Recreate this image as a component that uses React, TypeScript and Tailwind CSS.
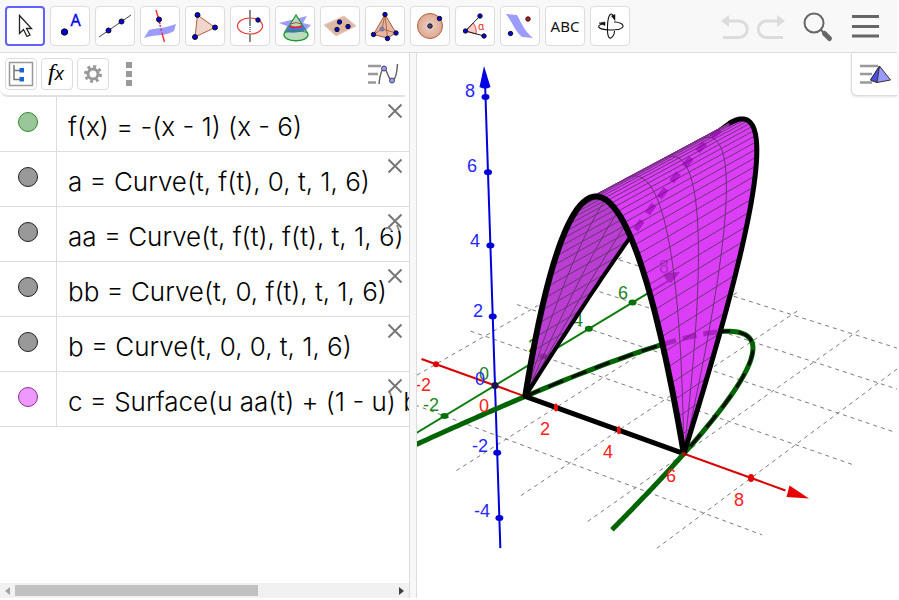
import type { ReactNode } from "react";

type Vec = [number, number, number];

/* ---------- 3D scene ---------- */

function project([x, y, z]: Vec): [number, number] {
  const w = 1 - 0.00794 * x + 0.01241 * y - 0.00697 * z;
  return [
    (495 + 26.04 * x + 30.77 * y - 4.571 * z) / w,
    (385.5 + 7.767 * x - 10.08 * y - 36.74 * z) / w,
  ];
}

function path(points: Vec[]): string {
  return points
    .map((p, i) => {
      const [u, v] = project(p);
      return `${i ? "L" : "M"}${u.toFixed(2)} ${v.toFixed(2)}`;
    })
    .join("");
}

function sample(from: number, to: number, at: (t: number) => Vec, n = 80): string {
  return path(Array.from({ length: n + 1 }, (_, i) => at(from + ((to - from) * i) / n)));
}

const f = (t: number) => -(t - 1) * (t - 6);
const surface = (t: number, u: number): Vec => [t, u * f(t), f(t)];

const STRIPS = 50;
const ts = Array.from({ length: STRIPS + 1 }, (_, i) => 1 + (5 * i) / STRIPS);
const strips = ts.slice(0, -1).map((t, i) => {
  const quad: Vec[] = [surface(t, 0), surface(ts[i + 1], 0), surface(ts[i + 1], 1), surface(t, 1)];
  const [a, b, c, d] = quad.map(project);
  const area = (c[0] - a[0]) * (d[1] - b[1]) - (c[1] - a[1]) * (d[0] - b[0]);
  const cross = [0.25, 0.5, 0.75].map((u) => path([surface(t, u), surface(ts[i + 1], u)])).join("");
  return {
    d: path(quad) + "Z",
    mesh: path([surface(t, 0), surface(t, 1)]) + cross,
    color: area < 0 ? "#dc3ef8" : "#bb3ed3",
    front: area < 0,
  };
});
const backStrips = strips.filter((s) => !s.front);
const frontStrips = strips.filter((s) => s.front);

const X_MIN = -2.5;
const X_MAX = 9.65;
const Y_MIN = -3.9;
const Y_MAX = 8.3;
const gridPath = [
  ...[-2, 2, 4, 6, 8].map((x) => path([[x, Y_MIN, 0], [x, Y_MAX, 0]])),
  ...[-2, 2, 4, 6, 8].map((y) => path([[X_MIN, y, 0], [X_MAX, y, 0]])),
].join("");

function Dot({ at, fill, rx = 3, ry = 3 }: { at: Vec; fill: string; rx?: number; ry?: number }) {
  const [u, v] = project(at);
  return <ellipse cx={u} cy={v} rx={rx} ry={ry} fill={fill} />;
}

function Label({ x, y, fill, children }: { x: number; y: number; fill: string; children: ReactNode }) {
  return (
    <text x={x} y={y} fill={fill} textAnchor="middle" fontSize="18" fontFamily="'Liberation Sans', Arial, sans-serif">
      {children}
    </text>
  );
}

function Strips({ items }: { items: typeof strips }) {
  return (
    <>
      {items.map((s, i) => (
        <g key={i}>
          <path d={s.d} fill={s.color} stroke={s.color} strokeWidth="0.500" />
          <path d={s.mesh} stroke="#5e3068" strokeWidth="0.900" fill="none" />
        </g>
      ))}
    </>
  );
}

function Graphics3D() {
  const ground = sample(1, 6, (t) => [t, f(t), 0]);
  return (
    <svg viewBox="417 53 480 545" className="block h-full w-full" role="img" aria-label="3D graphics view">
      <defs>
        <clipPath id="sheet">
          {strips.map((s, i) => (
            <path key={i} d={s.d} />
          ))}
        </clipPath>
        <clipPath id="front">
          {frontStrips.map((s, i) => (
            <path key={i} d={s.d} />
          ))}
        </clipPath>
      </defs>
      <path d={gridPath} stroke="#7c7c7c" strokeWidth="1" strokeDasharray="4 4" fill="none" />

      {/* y axis */}
      <path d={path([[0, Y_MIN, 0], [0, 8, 0]])} stroke="#0c7d0c" strokeWidth="2" />
      {[-2, 2, 4, 6].map((y) => (
        <Dot key={y} at={[0, y, 0]} fill="#077007" rx={4} />
      ))}
      <Label x={431} y={411} fill="#1b861b">-2</Label>
      <Label x={484} y={380} fill="#1b861b">0</Label>
      <Label x={533} y={352} fill="#1b861b">2</Label>
      <Label x={578} y={326} fill="#1b861b">4</Label>
      <Label x={623} y={299} fill="#1b861b">6</Label>

      {/* x axis */}
      <path d={path([[X_MIN, 0, 0], [9, 0, 0]])} stroke="#d90000" strokeWidth="2" />
      <path d="M789.500 485.500L786.500 497L809 498.500Z" fill="#e60000" />

      {/* z axis */}
      <path d={path([[0, 0, -4.94], [0, 0, 8.3]])} stroke="#0000d9" strokeWidth="2" />
      <path d="M484 66L479.500 87Q485 90 490.500 87Z" fill="#0000e6" />
      {[-4, -2, 2, 4, 6, 8].map((z) => (
        <Dot key={z} at={[0, 0, z]} fill="#0000d9" rx={4} />
      ))}
      <circle cx="495" cy="385.500" r="3.500" fill="#171750" />
      <Dot at={[-2, 0, 0]} fill="#e60000" rx={3} />
      <Dot at={[8, 0, 0]} fill="#e60000" ry={4} />

      {/* graph of f and the curves lying on the ground plane */}
      <path d={sample(-0.9, 1, (t) => [t, f(t), 0])} stroke="#006400" strokeWidth="5" fill="none" />
      <path d={ground} stroke="#006400" strokeWidth="5" fill="none" />
      <path d={ground} stroke="#0a0a0a" strokeWidth="3" strokeDasharray="16 9" fill="none" />

      {/* surface, far side first */}
      <Strips items={backStrips} />
      <path d={sample(1, 3.5, (t) => surface(t, 1))} stroke="#000" strokeWidth="4" fill="none" />
      <Strips items={frontStrips} />

      {/* parts seen through the surface */}
      <g clipPath="url(#sheet)" opacity="0.500">
        <path d={ground} stroke="#7d0a90" strokeWidth="5" strokeDasharray="14 7" fill="none" />
        <path d="M668 282L663 275Q668 272 680 272L671 283Z" fill="#7d0a90" />
        <path d={path([[0, 6, 0], [0, 8, 0]])} stroke="#7d0a90" strokeWidth="2" />
        <Dot at={[0, 2, 0]} fill="#6d167c" rx={4} />
        <Label x={664} y={273} fill="#7a1a8c">8</Label>
      </g>
      <g clipPath="url(#front)" opacity="0.550">
        <path d={sample(1, 3.5, (t) => surface(t, 1))} stroke="#8c00a8" strokeWidth="6" strokeDasharray="11 9" fill="none" />
      </g>

      {/* border curves */}
      <path d={sample(3.1, 6, (t) => surface(t, 1))} stroke="#000" strokeWidth="5" fill="none" />
      <path d={sample(1, 6, (t) => surface(t, 0))} stroke="#000" strokeWidth="6" fill="none" strokeLinejoin="round" />
      <path d={path([[1, 0, 0], [6, 0, 0]])} stroke="#000" strokeWidth="5" strokeLinecap="round" />
      <path d={sample(6, 6.68, (t) => [t, f(t), 0])} stroke="#006400" strokeWidth="5" fill="none" />
      {[2, 4].map((x) => (
        <Dot key={x} at={[x, 0, 0]} fill="#f01010" rx={2} ry={4} />
      ))}
      <circle cx="684" cy="454" r="2" fill="#c00000" />

      <Label x={423} y={391} fill="#ff2020">-2</Label>
      <Label x={484} y={412} fill="#ff2020">0</Label>
      <Label x={545} y={435} fill="#ff2020">2</Label>
      <Label x={608} y={458} fill="#ff2020">4</Label>
      <Label x={671} y={482} fill="#ff2020">6</Label>
      <Label x={739} y={506} fill="#ff2020">8</Label>
      <Label x={470} y={97} fill="#2626ff">8</Label>
      <Label x={472} y={172} fill="#2626ff">6</Label>
      <Label x={475} y={247} fill="#2626ff">4</Label>
      <Label x={478} y={317} fill="#2626ff">2</Label>
      <Label x={480} y={385} fill="#2626ff">0</Label>
      <Label x={480} y={452} fill="#2626ff">-2</Label>
      <Label x={482} y={517} fill="#2626ff">-4</Label>
    </svg>
  );
}

/* ---------- toolbar ---------- */

function P({ x, y, r = 2.5, fill = "#0000e6" }: { x: number; y: number; r?: number; fill?: string }) {
  return <circle cx={x} cy={y} r={r} fill={fill} stroke="#111" strokeWidth="1" />;
}

const tools: { name: string; icon: ReactNode }[] = [
  {
    name: "Move",
    icon: <path d="M14.500 9.500V27.500L18.500 23.500L22 30.500L25 29L21.500 22.500H26.500Z" fill="#fff" stroke="#222" strokeWidth="1.300" />,
  },
  {
    name: "Point",
    icon: (
      <>
        <P x={14.5} y={26} r={3.2} />
        <text x="25.500" y="20" textAnchor="middle" fontSize="16" fill="#0000e6" stroke="#0000e6" strokeWidth="0.300" fontFamily="'Noto Sans', sans-serif">A</text>
      </>
    ),
  },
  {
    name: "Line",
    icon: (
      <>
        <path d="M4 31L36 9" stroke="#444" />
        <P x={13.5} y={24.5} />
        <P x={26.5} y={15.5} />
      </>
    ),
  },
  {
    name: "Perpendicular Line",
    icon: (
      <>
        <path d="M16 4L20 18" stroke="#f33" strokeWidth="1.500" />
        <path d="M4 32L9 24C17 22 26 22 36 18L34 25C25 31 15 28 4 32Z" fill="#9c9cff" />
        <path d="M19 15L22 27" stroke="#c0307a" strokeWidth="1.500" strokeDasharray="2 2" />
        <path d="M22 27L24.500 36" stroke="#f33" strokeWidth="1.500" />
        <P x={19} y={13.5} />
      </>
    ),
  },
  {
    name: "Polygon",
    icon: (
      <>
        <path d="M12.500 9L30 21.500L10 31Z" fill="#f0d6cc" stroke="#b0603c" />
        <P x={12.5} y={9} />
        <P x={30} y={21.5} />
        <P x={10} y={31} />
      </>
    ),
  },
  {
    name: "Circle with Axis",
    icon: (
      <>
        <ellipse cx="20" cy="20" rx="12.500" ry="8" fill="none" stroke="#f03030" strokeWidth="1.200" />
        <path d="M20 4V20M20 28V36" stroke="#888" strokeWidth="2" />
        <path d="M20 21V27" stroke="#888" strokeWidth="2" strokeDasharray="1 1" />
        <P x={28} y={14} r={2.2} />
      </>
    ),
  },
  {
    name: "Intersect Two Surfaces",
    icon: (
      <>
        <path d="M4 17L32 10L28 17L36 19L30 25L9 26L12 20Z" fill="#9c9cff" />
        <path d="M21 9L9 28C8 37 34 37 33 28Z" fill="#b8dcbc" stroke="#1e9632" strokeWidth="1.300" />
        <path d="M15 19L11 26Q22 28 31 24L27 19Q20 22 15 19Z" fill="#4d6fd6" />
        <path d="M9 28C9 24 33 24 33 28" fill="none" stroke="#1e9632" />
        <path d="M14.500 20Q20.500 23 27 20" fill="none" stroke="#e22" strokeWidth="1.500" />
        <path d="M16 18Q21 15 26 18" fill="none" stroke="#b44" />
      </>
    ),
  },
  {
    name: "Plane through 3 Points",
    icon: (
      <>
        <path d="M4 19L24 10L36 20L16 30Z" fill="#deb8a6" stroke="#e8cabc" />
        <P x={19.5} y={16} r={2.2} />
        <P x={28} y={20.5} r={2.2} />
        <P x={17} y={23.5} r={2.2} />
      </>
    ),
  },
  {
    name: "Pyramid",
    icon: (
      <>
        <path d="M20 8.500L8.500 28.500L22.500 32L31 27Z" fill="#e6b8a4" stroke="#a85a38" />
        <path d="M20 8.500L22.500 32M20 8.500L17 23L8.500 28.500M17 23L31 27" fill="none" stroke="#a85a38" strokeWidth="0.900" />
        <circle cx="17" cy="23" r="2.500" fill="#7c7ca0" />
        <P x={20} y={8.5} r={2.2} />
        <P x={8.5} y={28.5} r={2.2} />
        <P x={22.5} y={32.5} r={2.2} />
        <P x={31} y={27} r={2.2} />
      </>
    ),
  },
  {
    name: "Sphere with Center through Point",
    icon: (
      <>
        <defs>
          <radialGradient id="ball">
            <stop offset="0" stopColor="#ecd2c8" />
            <stop offset="1" stopColor="#dda890" />
          </radialGradient>
        </defs>
        <circle cx="20" cy="20" r="12.500" fill="url(#ball)" stroke="#b0603c" />
        <P x={20} y={20} r={2.2} fill="#4646a0" />
        <P x={29.5} y={12.5} r={2.2} />
      </>
    ),
  },
  {
    name: "Angle",
    icon: (
      <>
        <path d="M10.500 25L18 17Q22 21 21 28Z" fill="#f6cccc" stroke="#e44" />
        <path d="M25 10L10.500 25L29 30" fill="none" stroke="#222" />
        <text x="26" y="24" textAnchor="middle" fontSize="10" fill="#e22" fontFamily="'Noto Sans', sans-serif">α</text>
        <P x={25} y={10} r={2.2} />
        <P x={10.5} y={25} r={2.2} />
        <P x={29} y={30} r={2.2} />
      </>
    ),
  },
  {
    name: "Reflect about Plane",
    icon: (
      <>
        <path d="M6 8L17 9C21 16 25 26 33 32L22 31C15 25 11 14 6 8Z" fill="#9c9cff" />
        <P x={10.5} y={27.5} r={2.2} />
        <P x={28} y={13} r={2.2} fill="#e01010" />
      </>
    ),
  },
  {
    name: "Text",
    icon: <text x="20" y="25.500" textAnchor="middle" fontSize="15" fill="#111" fontFamily="'Noto Sans', sans-serif">ABC</text>,
  },
  {
    name: "Rotate 3D Graphics View",
    icon: (
      <>
        <path d="M14 17.500C6 19 6 23.500 20 24S35 19.500 31 17.500S26 16 24 16" fill="none" stroke="#111" strokeWidth="1.100" />
        <path d="M24 12C22 5 18 7 17.500 20S20 34 23 30C24 29 24.500 27 24.500 25" fill="none" stroke="#111" strokeWidth="1.100" />
        <path d="M9 17L15 16V19.500ZM21.500 10L25 14.500V8.500Z" fill="#111" stroke="#111" strokeWidth="0.500" />
      </>
    ),
  },
];

function ToolButton({ name, active, children }: { name: string; active?: boolean; children: ReactNode }) {
  return (
    <button
      type="button"
      aria-label={name}
      className={`h-10 w-10 shrink-0 overflow-hidden rounded bg-white ${active ? "border-2 border-[#6161ff]" : "border border-[#dcdcdc]"}`}
    >
      <svg viewBox="0 0 40 40" className={active ? "-m-0.5 h-10 w-10" : "-m-px h-10 w-10"} fill="none">
        {children}
      </svg>
    </button>
  );
}

function Header() {
  return (
    <header className="flex items-center justify-between border-b border-[#dcdcdc] bg-[#f8f8f8] px-[5px] py-1.5">
      <nav aria-label="Tools" className="flex gap-[5px]">
        {tools.map((tool, i) => (
          <ToolButton key={tool.name} name={tool.name} active={i === 0}>
            {tool.icon}
          </ToolButton>
        ))}
      </nav>
      <div className="flex items-center pr-3">
        <button type="button" aria-label="Undo" className="h-10 w-9">
          <svg viewBox="0 0 36 40" className="h-10 w-9">
            <path d="M7 15H19A8.250 8.250 0 0 1 19 31.500H3" fill="none" stroke="#dcdcdc" strokeWidth="3" />
            <path d="M1 15L9 9V21Z" fill="#dcdcdc" />
          </svg>
        </button>
        <button type="button" aria-label="Redo" className="h-10 w-9">
          <svg viewBox="0 0 36 40" className="h-10 w-9">
            <path d="M23 15H10.500A8.250 8.250 0 0 0 10.500 31.500H27" fill="none" stroke="#dcdcdc" strokeWidth="3" />
            <path d="M29 15L21 9V21Z" fill="#dcdcdc" />
          </svg>
        </button>
        <button type="button" aria-label="Search" className="ml-2 h-10 w-10">
          <svg viewBox="0 0 40 40" className="h-10 w-10" fill="none" stroke="#666">
            <circle cx="14" cy="17" r="9.500" strokeWidth="2" />
            <path d="M20 23L24 27" strokeWidth="2" />
            <path d="M24.500 27.500L29.500 32.500" strokeWidth="5" strokeLinecap="round" />
          </svg>
        </button>
        <button type="button" aria-label="Menu" className="ml-3 h-10 w-7">
          <svg viewBox="0 0 28 40" className="h-10 w-7" stroke="#666" strokeWidth="3">
            <path d="M0 10.500H27M0 20.500H27M0 30H27" />
          </svg>
        </button>
      </div>
    </header>
  );
}

/* ---------- algebra view ---------- */

const rows = [
  { text: "f(x) = -(x - 1) (x - 6)", dot: "border-[#2f8a2f] bg-[#99c799]" },
  { text: "a = Curve(t, f(t), 0, t, 1, 6)", dot: "border-[#222222] bg-[#999999]" },
  { text: "aa = Curve(t, f(t), f(t), t, 1, 6)", dot: "border-[#222222] bg-[#999999]" },
  { text: "bb = Curve(t, 0, f(t), t, 1, 6)", dot: "border-[#222222] bg-[#999999]" },
  { text: "b = Curve(t, 0, 0, t, 1, 6)", dot: "border-[#222222] bg-[#999999]" },
  { text: "c = Surface(u aa(t) + (1 - u) bb(t), u, 0, 1)", dot: "border-[#8c2f9c] bg-[#ee99ff]" },
];

function StyleButton({ name, children }: { name: string; children: ReactNode }) {
  return (
    <button type="button" aria-label={name} className="flex h-8 w-8 items-center justify-center rounded border border-[#dcdcdc] bg-white">
      <svg viewBox="0 0 32 32" className="h-8 w-8 shrink-0" fill="none">
        {children}
      </svg>
    </button>
  );
}

function AlgebraView() {
  return (
    <section aria-label="Algebra" className="flex min-w-0 basis-[410px] flex-col border-r border-[#dcdcdc] bg-white">
      <div className="mr-1 flex h-11 shrink-0 items-center gap-1 rounded-bl-lg border-b-2 border-[#e2e2e2] px-[5px]">
        <StyleButton name="Auxiliary Objects">
          <path d="M4.500 4.500H27.500V27.500H4.500Z" stroke="#999" strokeWidth="1.500" />
          <path d="M9 7V21.500H15M9 12.500H15" stroke="#777" strokeWidth="1.500" />
          <path d="M14.500 10H19V14.500H14.500ZM14.500 19H19V23.500H14.500Z" fill="#1565d8" />
        </StyleButton>
        <StyleButton name="Function">
          <text x="15" y="22" textAnchor="middle" fontSize="19" fontStyle="italic" fill="#000" fontFamily="'Open Sans', sans-serif">
            <tspan fontFamily="'Liberation Serif', serif" fontSize="24">f</tspan>
            x
          </text>
        </StyleButton>
        <StyleButton name="Settings">
          <circle cx="16" cy="16" r="5" stroke="#999" strokeWidth="3" />
          <circle cx="16" cy="16" r="7.500" stroke="#999" strokeWidth="3" strokeDasharray="2.900 2.990" />
        </StyleButton>
        <button type="button" aria-label="More" className="ml-1 flex h-8 w-6 flex-col items-center justify-center gap-[3px]">
          <span className="h-1.5 w-1.5 bg-[#999999]" />
          <span className="h-1.5 w-1.5 bg-[#999999]" />
          <span className="h-1.5 w-1.5 bg-[#999999]" />
        </button>
        <button type="button" aria-label="Style Bar" className="ml-auto h-8 w-8">
          <svg viewBox="0 0 32 32" className="h-8 w-8" fill="none">
            <path d="M0 8H13M0 16H10M0 24.500H8" stroke="#999" strokeWidth="2.500" />
            <path d="M11 26C12 16 14 11 16 10.500C19 10 20 22 24 22.500C28 22 29 14 29.500 6" stroke="#666" strokeWidth="1.500" />
            <circle cx="16" cy="10.500" r="2.500" fill="#9999ff" stroke="#445" />
            <circle cx="24" cy="22.500" r="2.500" fill="#9999ff" stroke="#445" />
          </svg>
        </button>
      </div>
      <ul className="min-h-0 grow overflow-hidden">
        {rows.map((row) => (
          <li key={row.text} className="relative flex h-[55px] border-b border-[#dcdcdc]">
            <div className="flex w-[57px] shrink-0 justify-center border-r border-[#dcdcdc] pt-[15px]">
              <button type="button" aria-label="Show or hide object" className={`h-5 w-5 rounded-full border ${row.dot}`} />
            </div>
            <p className="min-w-0 grow overflow-hidden pt-3 pl-[11px] font-['Inter',sans-serif] text-[26px] leading-9 font-[350] whitespace-nowrap text-black">
              {row.text}
            </p>
            <button type="button" aria-label="Delete" className="absolute top-1 right-1 h-5 w-5 bg-white/50">
              <svg viewBox="0 0 20 20" className="h-5 w-5" stroke="#777" strokeWidth="2">
                <path d="M3.500 3.500L16.500 16.500M16.500 3.500L3.500 16.500" />
              </svg>
            </button>
          </li>
        ))}
      </ul>
      <div className="flex h-[15px] shrink-0 items-center bg-[#f1f1f1]">
        <button type="button" aria-label="Scroll left" className="flex w-[15px] justify-center">
          <svg viewBox="0 0 5 8" className="h-2 w-[5px]" fill="#a3a3a3">
            <path d="M5 0V8L0 4Z" />
          </svg>
        </button>
        <div className="h-[11px] grow">
          <div className="h-full w-[64%] bg-[#c1c1c1]" />
        </div>
        <button type="button" aria-label="Scroll right" className="flex w-[15px] justify-center">
          <svg viewBox="0 0 5 8" className="h-2 w-[5px]" fill="#404040">
            <path d="M0 0V8L5 4Z" />
          </svg>
        </button>
      </div>
    </section>
  );
}

export default function App() {
  return (
    <div className="flex h-screen flex-col bg-white pr-0.5 pb-0.5">
      <Header />
      <main className="flex min-h-0 grow">
        <AlgebraView />
        <div className="w-[7px] shrink-0 border-r border-[#dcdcdc] bg-[#f8f8f8]" />
        <section aria-label="3D Graphics" className="relative min-w-0 flex-1 bg-white">
          <Graphics3D />
          <button
            type="button"
            aria-label="3D Style Bar"
            className="absolute top-0 right-0 h-[43px] w-[46px] rounded-bl-md border-b border-l border-[#dcdcdc] bg-white shadow-sm"
          >
            <svg viewBox="0 0 45 42" className="h-[42px] w-[45px]" fill="none">
              <path d="M8 13H26M8 21H20M8 29.500H20" stroke="#999" strokeWidth="2.500" />
              <path d="M27.500 13L18.500 27L25 29.500L38.500 27Z" fill="#9999ff" stroke="#333" />
              <path d="M27.500 13L18.500 27L25 29.500Z" fill="#4d4de6" stroke="#333" />
            </svg>
          </button>
        </section>
      </main>
    </div>
  );
}
